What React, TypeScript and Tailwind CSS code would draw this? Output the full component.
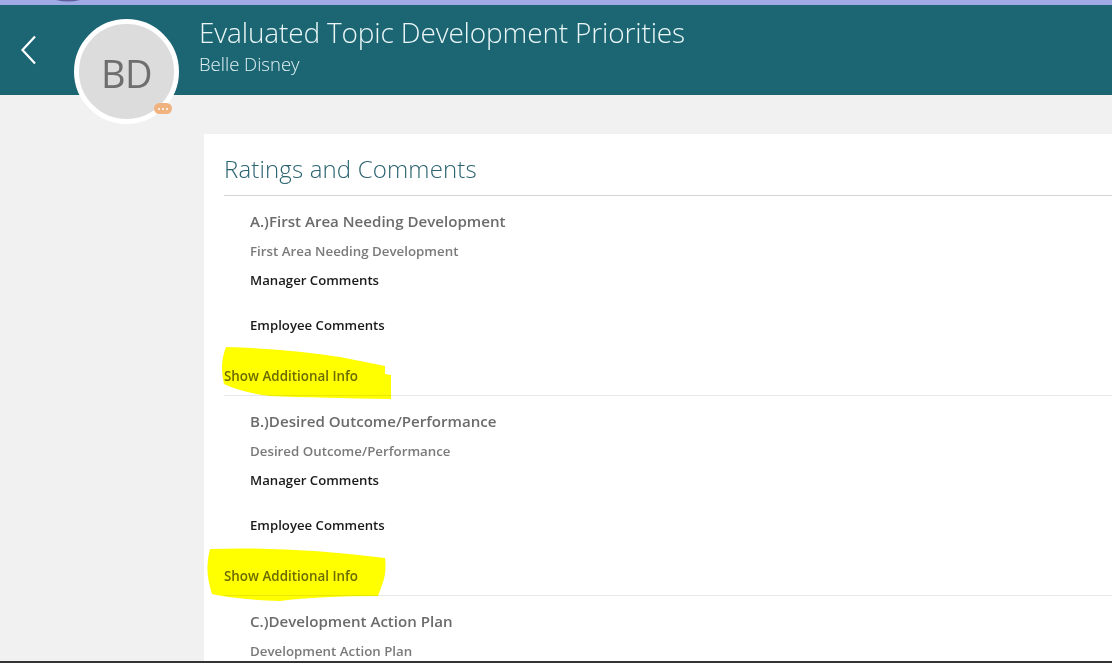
const sections = [
	{ title: 'A.)First Area Needing Development', sub: 'First Area Needing Development', full: true },
	{ title: 'B.)Desired Outcome/Performance', sub: 'Desired Outcome/Performance', full: true },
	{ title: 'C.)Development Action Plan', sub: 'Development Action Plan', full: false },
];

function Section({ title, sub, full }: { title: string; sub: string; full: boolean }) {
	return (
		<div className={full ? 'h-[200px] shrink-0 pt-[15px] border-b border-[#e8e8e8]' : 'shrink-0 pt-[15px]'}>
			<div className="pl-[26px]">
				<h3 className="h-[20px] text-[15.1px] leading-[20px] font-semibold text-[#6b6b6b]">{title}</h3>
				<p className="mt-[10px] h-[20px] text-[13.3px] leading-[20px] font-semibold text-[#7a7a7a]">{sub}</p>
				{full && (
					<>
						<p className="mt-[9px] h-[20px] text-[13.2px] leading-[20px] font-semibold text-[#1a1a1a]">Manager Comments</p>
						<p className="mt-[25px] h-[20px] text-[13.2px] leading-[20px] font-semibold text-[#1a1a1a]">Employee Comments</p>
					</>
				)}
			</div>
			{full && (
				<p className="mt-[31px] h-[20px] text-[13.4px] leading-[20px] font-semibold text-[#6b6b6b]">Show Additional Info</p>
			)}
		</div>
	);
}

export default function App() {
	return (
		<div className="relative h-[663px] w-[1112px] overflow-hidden flex flex-col bg-[#f1f1f1] font-['Open_Sans',sans-serif]">
			<div className="h-[5px] shrink-0 bg-[#a0aae4]" />

			{/* Header */}
			<div className="h-[90px] shrink-0 bg-[#1c6674] flex text-white">
				<div className="w-[199px] shrink-0 pl-[20px] pt-[30px]">
					<svg width="17" height="30" viewBox="0 0 17 30" fill="none" stroke="#ffffff" strokeWidth="2.2">
						<path d="M15 1.5 L2.5 15 L15 28.5" />
					</svg>
				</div>
				<div>
					<h1 className="mt-[8px] text-[28px] leading-[38px] font-light text-[#eaf6f6] tracking-[-0.15px]">Evaluated Topic Development Priorities</h1>
					<p className="mt-[1px] text-[18.5px] leading-[24px] font-light text-[#e2f2f3]">Belle Disney</p>
				</div>
			</div>

			{/* Content */}
			<div className="flex-1 min-h-0 pl-[204px] pt-[39px]">
				<div className="h-full bg-white pl-[20px] overflow-hidden">
					<div className="h-[62px] border-b border-[#d4d6d6]">
						<h2 className="pt-[17px] text-[24px] leading-[36px] font-light text-[#2b6371] tracking-[0.15px]">Ratings and Comments</h2>
					</div>
					{sections.map((s) => (
						<Section key={s.title} title={s.title} sub={s.sub} full={s.full} />
					))}
				</div>
			</div>

			<div className="h-[2px] shrink-0 bg-[#333]" />

			{/* Avatar */}
			<div className="absolute left-[74px] top-[19px] w-[105px] h-[105px] rounded-full bg-[#dcdcdc] border-[5px] border-white flex items-center justify-center">
				<span className="mt-[4px] text-[38px] text-[#6e6e6e] tracking-[-0.5px]">BD</span>
				<div className="absolute left-[75px] top-[79px] w-[18px] h-[11px] rounded-full bg-[#f0b27f] flex items-center justify-center gap-[2px]">
					<span className="w-[2px] h-[2px] rounded-full bg-white" />
					<span className="w-[2px] h-[2px] rounded-full bg-white" />
					<span className="w-[2px] h-[2px] rounded-full bg-white" />
				</div>
			</div>

			{/* Arc poking in at the top of the strip */}
			<svg className="absolute left-[56px] top-0" width="24" height="2" viewBox="0 0 24 2" fill="#5f5f9c">
				<path d="M0 0 Q12 3 24 0 Z" />
			</svg>

			{/* Yellow marker strokes */}
			<svg className="absolute left-0 top-0 mix-blend-multiply" width="1112" height="663" viewBox="0 0 1112 663" fill="#ffff00">
				<path d="M226 347 Q290 349 340 357 L385 366 L385 374 L391 375 L391 399 Q320 398 270 396 Q240 392 224 384 Q219 365 226 347 Z" />
				<path d="M210 549 Q290 546 385 558 Q387 572 382 585 L378 596 Q320 596 280 601 Q240 600 212 594 Q204 570 210 549 Z" />
			</svg>
		</div>
	);
}
